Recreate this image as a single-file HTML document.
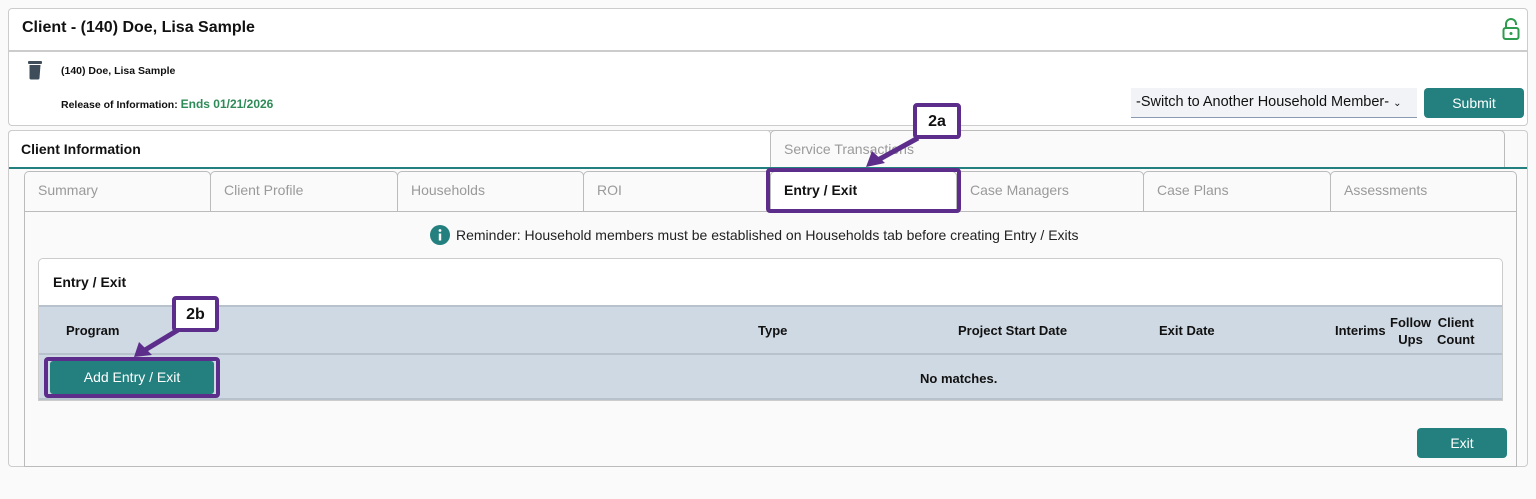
<!DOCTYPE html>
<html><head><style>
*{box-sizing:border-box;margin:0;padding:0}
body{width:1536px;height:499px;background:#fafafa;font-family:"Liberation Sans",Arial,sans-serif;position:relative;overflow:hidden;color:#111}
.a{position:absolute}
.b{font-weight:bold}
.tab{position:absolute;top:171px;height:40px;border:1px solid #bbb;border-bottom:none;border-radius:5px 5px 0 0;background:#fafafa;color:#9a9a9a;font-size:14px;padding:10px 13px}
.th{position:absolute;font-size:13px;font-weight:bold}
.pur{position:absolute;border:4px solid #5c2d8a;border-radius:4px}
.btn{position:absolute;background:#23807f;color:#fff;border-radius:3px;font-size:14px;text-align:center}
</style></head><body>
<div class="a" style="left:8px;top:8px;width:1520px;height:118px;background:#fff;border:1px solid #ccc;border-radius:4px"></div>
<div class="a" style="left:8px;top:50px;width:1520px;height:2px;background:#ccc"></div>
<div class="a b" style="left:22px;top:19px;font-size:16px">Client - (140) Doe, Lisa Sample</div>
<svg class="a" style="left:1501px;top:18px" width="20" height="24" viewBox="0 0 20 24"><path d="M5 10V6a5 5 0 0 1 10 0v1" fill="none" stroke="#2e9c4e" stroke-width="2"/><rect x="2.5" y="10" width="15" height="11" rx="2" fill="none" stroke="#2e9c4e" stroke-width="2"/><circle cx="10" cy="15.5" r="1.5" fill="#2e9c4e"/></svg>
<svg class="a" style="left:28px;top:60px" width="14" height="20" viewBox="0 0 14 20"><rect x="0" y="1" width="14" height="3" rx="1" fill="#3f4d5a"/><path d="M1.5 5h11l-1 13q0 1.5-1.5 1.5h-7q-1.5 0-1.5-1.5z" fill="#3f4d5a"/></svg>
<div class="a b" style="left:61px;top:65px;font-size:10.5px">(140) Doe, Lisa Sample</div>
<div class="a b" style="left:61px;top:97px;font-size:10.5px">Release of Information: <span style="color:#2e8b57;font-size:12px">Ends 01/21/2026</span></div>
<div class="a" style="left:1131px;top:88px;width:286px;height:30px;background:#f1f3f6;border-bottom:1px solid #8a9ab0;font-size:14.5px;padding:6px 5px">-Switch to Another Household Member- <span style="font-size:10px">&#8964;</span></div>
<div class="btn" style="left:1424px;top:88px;width:100px;height:30px;padding-top:7px;border-radius:4px">Submit</div>
<div class="a" style="left:8px;top:130px;width:1520px;height:337px;background:#fafafa;border:1px solid #ccc;border-radius:4px"></div>
<div class="a" style="left:8px;top:130px;width:763px;height:39px;background:#fff;border:1px solid #ccc;border-bottom:none;border-radius:4px 4px 0 0"></div>
<div class="a" style="left:9px;top:167px;width:1518px;height:2px;background:#23807f"></div>
<div class="a b" style="left:21px;top:141px;font-size:14px">Client Information</div>
<div class="a" style="left:770px;top:130px;width:735px;height:37px;background:#fafafa;border:1px solid #bbb;border-bottom:none;border-radius:5px 5px 0 0;color:#9a9a9a;font-size:14px;padding:10px 13px">Service Transactions</div>
<div class="tab" style="left:24px;width:187px">Summary</div>
<div class="tab" style="left:210px;width:188px">Client Profile</div>
<div class="tab" style="left:397px;width:187px">Households</div>
<div class="tab" style="left:583px;width:188px">ROI</div>
<div class="tab" style="left:770px;width:187px;background:#fff;color:#111;font-weight:bold">Entry / Exit</div>
<div class="tab" style="left:956px;width:188px">Case Managers</div>
<div class="tab" style="left:1143px;width:188px">Case Plans</div>
<div class="tab" style="left:1330px;width:187px">Assessments</div>
<div class="a" style="left:24px;top:211px;width:1493px;height:256px;border:1px solid #bbb;background:#fafafa"></div>
<svg class="a" style="left:430px;top:225px" width="20" height="20"><circle cx="10" cy="10" r="10" fill="#23807f"/><rect x="8.8" y="8.5" width="2.4" height="7" fill="#fff"/><circle cx="10" cy="5.5" r="1.4" fill="#fff"/></svg>
<div class="a" style="left:456px;top:227px;font-size:14px;color:#222">Reminder: Household members must be established on Households tab before creating Entry / Exits</div>
<div class="a" style="left:38px;top:258px;width:1465px;height:143px;background:#fff;border:1px solid #ccc;border-radius:5px 5px 0 0"></div>
<div class="a b" style="left:53px;top:274px;font-size:14px">Entry / Exit</div>
<div class="a" style="left:39px;top:305px;width:1463px;height:95px;background:#cfd9e3;border-top:2px solid #b8c2cc;border-bottom:2px solid #b8c2cc"></div>
<div class="a" style="left:39px;top:353px;width:1463px;height:2px;background:#b8c2cc"></div>
<div class="th" style="left:66px;top:323px">Program</div>
<div class="th" style="left:758px;top:323px">Type</div>
<div class="th" style="left:958px;top:323px">Project Start Date</div>
<div class="th" style="left:1159px;top:323px">Exit Date</div>
<div class="th" style="left:1335px;top:323px">Interims</div>
<div class="th" style="left:1390px;top:314px;text-align:center;line-height:17px">Follow<br>Ups</div>
<div class="th" style="left:1437px;top:314px;text-align:center;line-height:17px">Client<br>Count</div>
<div class="th" style="left:920px;top:371px">No matches.</div>
<div class="btn" style="left:50px;top:361px;width:164px;height:33px;padding-top:8px">Add Entry / Exit</div>
<div class="btn" style="left:1417px;top:428px;width:90px;height:30px;padding-top:7px;border-radius:4px">Exit</div>
<div class="pur" style="left:766px;top:168px;width:195px;height:45px"></div>
<div class="pur" style="left:44px;top:357px;width:176px;height:41px"></div>
<svg class="a" style="left:0;top:0" width="1536" height="499"><g stroke="#5c2d8a" stroke-width="5" fill="#5c2d8a"><line x1="918" y1="138" x2="878" y2="160"/><line x1="178" y1="330" x2="145" y2="350"/></g><polygon points="866,167 872,151 885,163" fill="#5c2d8a"/><polygon points="134,357 139,342 152,355" fill="#5c2d8a"/></svg>
<div class="pur b" style="left:913px;top:103px;width:48px;height:36px;background:#fff;font-size:16px;text-align:center;padding-top:6px">2a</div>
<div class="pur b" style="left:172px;top:296px;width:47px;height:36px;background:#fff;font-size:16px;text-align:center;padding-top:6px">2b</div>
</body></html>
